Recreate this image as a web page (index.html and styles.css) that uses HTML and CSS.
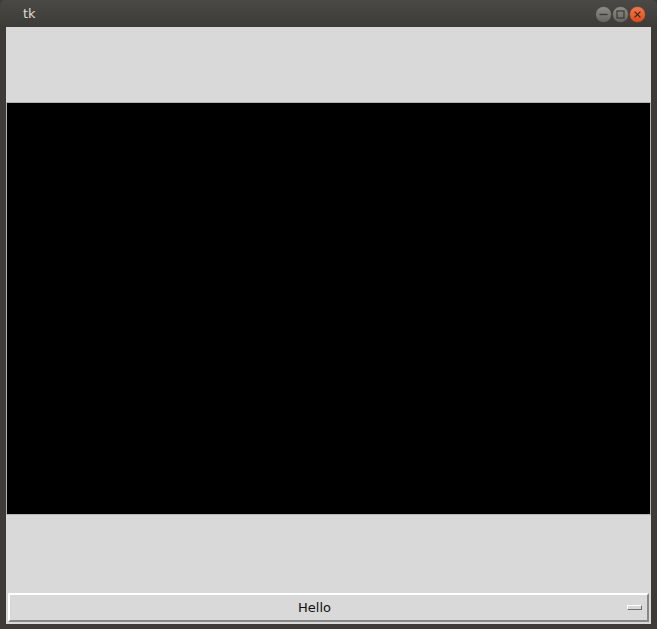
FILE: index.html
```html
<!DOCTYPE html>
<html lang="en">
<head>
<meta charset="utf-8">
<title>tk</title>
<link rel="stylesheet" href="styles.css">
</head>
<body>
<div class="window">
  <div class="titlebar">
    <span class="title">tk</span>
    <div class="controls">
      <svg class="ctl" width="17" height="17" viewBox="0 0 17 17">
        <defs>
          <linearGradient id="g1" x1="0" y1="0" x2="0" y2="1">
            <stop offset="0" stop-color="#8e8d88"/>
            <stop offset="1" stop-color="#65645f"/>
          </linearGradient>
          <linearGradient id="g2" x1="0" y1="0" x2="0" y2="1">
            <stop offset="0" stop-color="#f47a4c"/>
            <stop offset="1" stop-color="#dc4a18"/>
          </linearGradient>
        </defs>
        <circle cx="8.5" cy="8.5" r="8" fill="url(#g1)" stroke="#3a3935" stroke-width="0.6"/>
        <line x1="4.5" y1="8.5" x2="12.5" y2="8.5" stroke="#3b3a36" stroke-width="1.3"/>
      </svg>
      <svg class="ctl" width="17" height="17" viewBox="0 0 17 17">
        <circle cx="8.5" cy="8.5" r="8" fill="url(#g1)" stroke="#3a3935" stroke-width="0.6"/>
        <rect x="5" y="5" width="7" height="7" fill="none" stroke="#3b3a36" stroke-width="1.2"/>
      </svg>
      <svg class="ctl" width="17" height="17" viewBox="0 0 17 17">
        <circle cx="8.5" cy="8.5" r="8" fill="url(#g2)" stroke="#3a3935" stroke-width="0.6"/>
        <path d="M5.6 5.6 L11.4 11.4 M11.4 5.6 L5.6 11.4" stroke="#3b2a22" stroke-width="1.3"/>
      </svg>
    </div>
  </div>
  <div class="client">
    <div class="spacer-top"></div>
    <div class="canvas"></div>
    <div class="spacer-bottom"></div>
    <div class="menubutton">
      <span class="label">Hello</span>
      <span class="indicator"></span>
    </div>
  </div>
</div>
</body>
</html>
```
FILE: styles.css
```css
html, body {
  margin: 0;
  padding: 0;
  background: #3c3b37;
}
.window {
  width: 657px;
  height: 629px;
  display: flex;
  flex-direction: column;
  background: #3c3b37;
  overflow: hidden;
}
.titlebar {
  height: 27px;
  flex: none;
  display: flex;
  align-items: center;
  justify-content: space-between;
  background: linear-gradient(#4a4945, #3c3b37);
  border-radius: 5px 5px 0 0;
  box-sizing: border-box;
  padding: 0 11px 0 23px;
}
.title {
  font-family: "DejaVu Sans", sans-serif;
  font-weight: 500;
  font-size: 13px;
  color: #dfdbd2;
  line-height: 27px;
}
.controls {
  display: flex;
  gap: 0;
  align-items: center;
  margin-top: 1px;
}
.ctl {
  display: block;
}
.client {
  margin: 0 6px;
  height: 597px;
  flex: none;
  background: #d9d9d9;
  display: flex;
  flex-direction: column;
}
.spacer-top {
  height: 75px;
  flex: none;
}
.canvas {
  height: 411px;
  flex: none;
  background: #000;
  border: 1px solid #b4b4b4;
}
.spacer-bottom {
  height: 78px;
  flex: none;
}
.menubutton {
  margin: 0 2px;
  height: 29px;
  box-sizing: border-box;
  border: 2px solid;
  border-color: #ffffff #878787 #878787 #ffffff;
  background: #d9d9d9;
  display: flex;
  align-items: center;
  padding: 0 5px 0 0;
}
.label {
  flex: 1;
  text-align: center;
  font-family: "DejaVu Sans", sans-serif;
  font-size: 13px;
  color: #111;
}
.indicator {
  width: 15px;
  height: 5px;
  box-sizing: border-box;
  border: 1px solid;
  border-color: #ffffff #6e6e6e #6e6e6e #ffffff;
  background: #d9d9d9;
  margin-left: 8px;
}
```
